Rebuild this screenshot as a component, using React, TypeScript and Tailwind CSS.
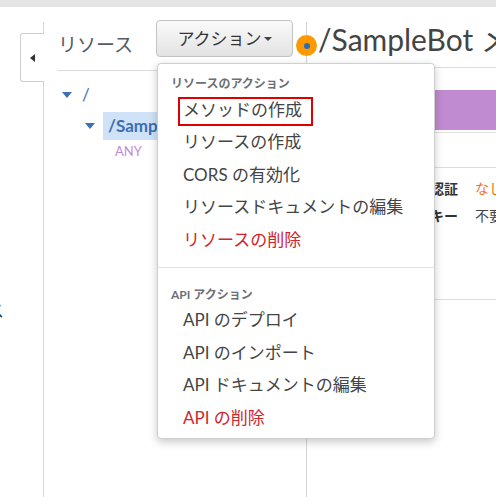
import React from "react";

const jp = { fontFamily: "Lato, 'Noto Sans CJK JP', 'Noto Sans', sans-serif" };

function Caret({ color = "#3b6fb6" }: { color?: string }) {
    return <span className="inline-block w-0 h-0 border-x-[5px] border-x-transparent border-t-[6px]" style={{ borderTopColor: color }} />;
}

const resourceItems = [
    { label: "メソッドの作成", danger: false, marked: true },
    { label: "リソースの作成", danger: false },
    { label: "CORS の有効化", danger: false },
    { label: "リソースドキュメントの編集", danger: false },
    { label: "リソースの削除", danger: true },
];

const apiItems = [
    { label: "API のデプロイ", danger: false },
    { label: "API のインポート", danger: false },
    { label: "API ドキュメントの編集", danger: false },
    { label: "API の削除", danger: true },
];

function MenuItem({ label, danger, marked }: { label: string; danger: boolean; marked?: boolean }) {
    return (
        <div className={`relative h-[32.5px] flex items-center pl-[25px] text-[17px] ${danger ? "text-[#d0252d]" : "text-[#444]"}`}>
            {label}
            {marked && <div className="absolute left-[20px] top-[4px] w-[135px] h-[29px] border-2 border-[#e00000]" />}
        </div>
    );
}

export default function App() {
    return (
        <div className="relative w-[496px] h-[497px] overflow-hidden bg-white" style={jp}>
            {/* top bar */}
            <div className="h-[7px] bg-[#e5e5e5]" />

            <div className="flex mt-[15px] h-[475px]">
                {/* left nav (cut off) */}
                <div className="w-[43px] shrink-0 pt-[279px] overflow-hidden">
                    <span className="block -ml-[13px] text-[17px] leading-[20px] text-[#2d3e50]">ス</span>
                </div>

                {/* resource tree */}
                <div className="relative w-[264px] shrink-0 border-x border-[#d5d5d5]">
                    <div className="absolute -left-[24px] top-[11px] w-[24px] h-[49px] bg-white border border-r-0 border-[#cfcfcf] rounded-l-[3px] flex items-center justify-center">
                        <span className="inline-block w-0 h-0 border-y-[4px] border-y-transparent border-r-[5px] border-r-[#333]" />
                    </div>

                    <div className="flex h-[48px] pl-[14px]">
                        <div className="w-[98px] mt-[11px] text-[19px] leading-[24px] text-[#545b64]">リソース</div>
                        <button className="-mt-[2px] w-[137px] h-[37px] rounded-[4px] border border-[#c3c3c3] bg-gradient-to-b from-[#fafafa] to-[#e3e3e3] flex items-center justify-center gap-[2px] text-[17px] text-[#333]">
                            アクション
                            <span className="inline-block w-0 h-0 border-x-[4px] border-x-transparent border-t-[4px] border-t-[#444]" />
                        </button>
                    </div>
                    <div className="h-px bg-[#dcdcdc] mx-[13px]" />

                    <div className="mt-[11px] h-[26px] flex items-center pl-[18px] gap-[10px] text-[#3b6fb6] text-[17px]">
                        <Caret />
                        <span>/</span>
                    </div>
                    <div className="mt-[4px] h-[28px] flex items-center pl-[41px] gap-[8px]">
                        <Caret />
                        <span className="h-full flex items-center px-[5px] bg-[#cfe2f7] text-[#3b6fb6] font-bold text-[17px] whitespace-nowrap">/SampleBot</span>
                    </div>
                    <div className="h-[24px] flex items-center pl-[71px] text-[13px] text-[#c48ad8]">ANY</div>
                </div>

                {/* detail panel */}
                <div className="relative flex-1">
                    <div className="absolute -left-[11px] top-[13px] w-[21px] h-[21px] rounded-full bg-[#f90] flex items-center justify-center">
                        <div className="w-[6px] h-[6px] rounded-full bg-[#2e6bb8]" />
                    </div>
                    <div className="mt-[1px] pl-[11px] h-[33px] text-[30px] leading-[33px] text-[#444] whitespace-nowrap">/SampleBot メソッド</div>
                    <div className="mt-[11px] h-px bg-[#dcdcdc]" />
                    <div className="mt-[22px] h-[40px] bg-[#c08bd0] mr-[5px]" />
                    <div className="mt-[2px] h-px bg-[#e3e3e3]" />
                    <div className="mt-[34px] h-px bg-[#dcdcdc]" />
                    <div className="mt-[7px] text-[14px]">
                        <div className="h-[27px] flex items-center">
                            <span className="w-[151px] text-right font-semibold text-[#333]">認証</span>
                            <span className="ml-[17px] text-[#ec7211]">なし</span>
                        </div>
                        <div className="h-[27px] flex items-center">
                            <span className="w-[151px] text-right font-semibold text-[#333]">API キー</span>
                            <span className="ml-[17px] text-[#444]">不要</span>
                        </div>
                    </div>
                    <div className="mt-[70px] h-px bg-[#dcdcdc]" />
                </div>
            </div>

            {/* actions dropdown */}
            <div className="absolute left-[157px] top-[63px] w-[278px] h-[376px] bg-white border border-[#cfcfcf] rounded-[4px] shadow-[0_3px_8px_rgba(0,0,0,0.22)] pt-[11px]">
                <div className="h-[18px] flex items-center pl-[13px] text-[12px] font-bold text-[#6b7077]">リソースのアクション</div>
                {resourceItems.map((it) => (
                    <MenuItem key={it.label} {...it} />
                ))}
                <div className="mt-[11px] h-px bg-[#e1e1e1]" />
                <div className="mt-[18px] h-[18px] flex items-center pl-[13px] text-[12px] font-bold text-[#6b7077]">API アクション</div>
                {apiItems.map((it) => (
                    <MenuItem key={it.label} {...it} />
                ))}
            </div>
        </div>
    );
}
